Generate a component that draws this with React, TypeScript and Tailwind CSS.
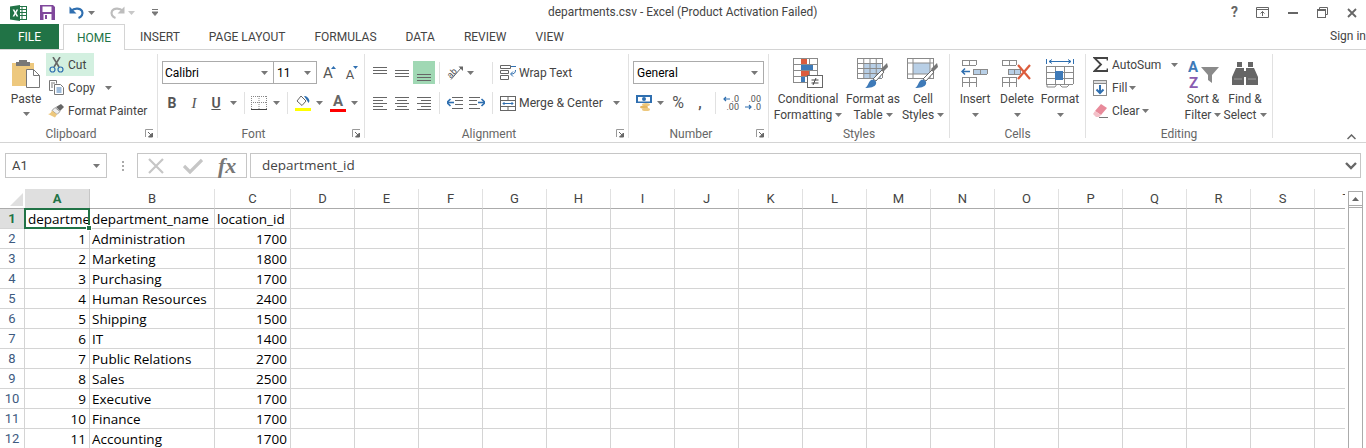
import React from 'react'

const ui = "font-['Roboto','Noto_Sans',sans-serif]"
const cellFont = "font-['Open_Sans','Noto_Sans',sans-serif]"

const colWidths = [65, 125, 76, ...Array(17).fill(64)]
const colNames = 'ABCDEFGHIJKLMNOPQRST'.split('')

const rows: [string, string, string][] = [
  ['department_id', 'department_name', 'location_id'],
  ['1', 'Administration', '1700'],
  ['2', 'Marketing', '1800'],
  ['3', 'Purchasing', '1700'],
  ['4', 'Human Resources', '2400'],
  ['5', 'Shipping', '1500'],
  ['6', 'IT', '1400'],
  ['7', 'Public Relations', '2700'],
  ['8', 'Sales', '2500'],
  ['9', 'Executive', '1700'],
  ['10', 'Finance', '1700'],
  ['11', 'Accounting', '1700'],
]

function Caret({ className = '' }: { className?: string }) {
  return (
    <svg width="7" height="4" viewBox="0 0 7 4" className={`shrink-0 ${className}`}>
      <path d="M0 0h7L3.5 4z" fill="#777" />
    </svg>
  )
}

function Box({ w = 22, children, className = '' }: { w?: number; children?: React.ReactNode; className?: string }) {
  return (
    <div className={`flex h-[22px] shrink-0 items-center justify-center ${className}`} style={{ width: w }}>
      {children}
    </div>
  )
}

function Sep({ className = '' }: { className?: string }) {
  return <div className={`h-[22px] w-px shrink-0 bg-[#e1e1e1] ${className}`} />
}

function Launcher() {
  return (
    <svg width="9" height="9" viewBox="0 0 9 9" className="absolute bottom-0 right-[3px]">
      <path d="M0.5 8V0.5H8" fill="none" stroke="#999" />
      <path d="M3 3l4 4M7.5 4v4h-4z" stroke="#666" fill="#666" />
    </svg>
  )
}

function Group({
  width,
  label,
  launcher = false,
  children,
}: {
  width: string
  label: string
  launcher?: boolean
  children: React.ReactNode
}) {
  return (
    <div className={`relative flex h-[84px] shrink-0 flex-col border-r border-[#e1e1e1] ${width}`}>
      <div className="flex h-[72px] min-h-0">{children}</div>
      <div className={`-mb-[4px] mt-auto h-[16px] text-center text-[12px] leading-[16px] text-[#666] ${launcher ? 'pr-[15px]' : ''}`}>
        {label}
      </div>
      {launcher && <Launcher />}
    </div>
  )
}

function BigButton({
  width,
  icon,
  line1,
  line2,
}: {
  width: string
  icon: React.ReactNode
  line1: string
  line2?: string
}) {
  return (
    <div className={`flex shrink-0 flex-col items-center text-[12px] leading-[16px] ${width}`}>
      <div className="mt-[3px] flex h-[33px] items-center justify-center">{icon}</div>
      <div className="mt-[1px] whitespace-nowrap">{line1}</div>
      {line2 ? (
        <div className="flex items-center gap-[3px] whitespace-nowrap">
          {line2}
          <Caret />
        </div>
      ) : (
        <div className="flex h-[16px] items-center">
          <Caret />
        </div>
      )}
    </div>
  )
}

function ExcelLogo() {
  return (
    <svg width="17" height="16" viewBox="0 0 17 16">
      <rect x="8" y="1.5" width="8.5" height="13" fill="#fff" stroke="#217346" />
      <path d="M8 4.5h8M8 7.5h8M8 10.5h8M12 2v12" stroke="#217346" />
      <path d="M0 1.5L10 0v16L0 14.5z" fill="#217346" />
      <path d="M2.6 4.5h1.8l1 2.2 1.1-2.2h1.7L6.4 8l1.9 3.5H6.5L5.4 9.2l-1.1 2.3H2.6L4.5 8z" fill="#fff" />
    </svg>
  )
}

function SaveIcon() {
  return (
    <svg width="15" height="15" viewBox="0 0 15 15">
      <path d="M0 0h13l2 2v13H0z" fill="#80489c" />
      <rect x="2.5" y="1.5" width="9" height="5.5" fill="#fff" />
      <rect x="3.5" y="9" width="8" height="6" fill="#fff" />
      <rect x="5" y="10" width="2" height="4" fill="#80489c" />
    </svg>
  )
}

function UndoArrow({ color }: { color: string }) {
  return (
    <svg width="16" height="15" viewBox="0 0 16 15">
      <path d="M2 6c3-3 9-3.5 11 0 1.5 3-.5 6-3.5 7" fill="none" stroke={color} strokeWidth="2.2" />
      <path d="M0.5 1.5v7h7z" fill={color} />
    </svg>
  )
}

function PasteIcon() {
  return (
    <svg width="30" height="30" viewBox="0 0 30 30">
      <path d="M1 5h22v23H1z" fill="#edc87e" />
      <path d="M8 2h8v2h3v4H5V4h3z" fill="#777" />
      <path d="M15.5 11.5h7l6 6v12h-13z" fill="#fff" stroke="#777" />
      <path d="M22.5 11.5v6h6" fill="none" stroke="#777" />
    </svg>
  )
}

function ScissorsIcon() {
  return (
    <svg width="15" height="16" viewBox="0 0 15 16">
      <path d="M4 0l6 10M11 0L5 10" stroke="#666" strokeWidth="1.6" fill="none" />
      <circle cx="3.5" cy="12.5" r="2.5" fill="none" stroke="#2f6fb0" strokeWidth="1.2" />
      <circle cx="11.5" cy="12.5" r="2.5" fill="none" stroke="#2f6fb0" strokeWidth="1.2" />
    </svg>
  )
}

function CopyIcon() {
  return (
    <svg width="15" height="15" viewBox="0 0 15 15">
      <path d="M.5.5h7v3M.5.5v10h3.5" fill="none" stroke="#777" />
      <path d="M2 3h4M2 5h2M2 7h2" stroke="#777" />
      <path d="M5.5 4.5h6l3 3v7h-9z" fill="#fff" stroke="#777" />
      <path d="M7.5 8h5M7.5 10h5M7.5 12h5" stroke="#3e7ab8" />
    </svg>
  )
}

function BrushIcon() {
  return (
    <svg width="16" height="14" viewBox="0 0 16 14">
      <path d="M8 3l5-3 3 3-4 4z" fill="#666" />
      <path d="M7 3.5l5 4-3 3-5-4z" fill="#eee" stroke="#999" />
      <path d="M4 6.5l5 4-2 3-7-3.5c2 0 3-1.5 4-3.5z" fill="#edc87e" />
    </svg>
  )
}

function FontGrow({ up }: { up: boolean }) {
  return (
    <div className="relative flex h-[16px] w-[16px] items-end justify-center">
      <span className={`leading-none text-[#555] ${up ? 'text-[15px]' : 'text-[13px]'}`}>A</span>
      <svg width="5" height="3" viewBox="0 0 5 3" className="absolute right-0 top-[1px]">
        <path d={up ? 'M0 3h5L2.5 0z' : 'M0 0h5L2.5 3z'} fill="#2f6fb0" />
      </svg>
    </div>
  )
}

function BorderIcon() {
  return (
    <svg width="16" height="14" viewBox="0 0 16 14">
      <path d="M.5 0v13M15.5 0v13M8 0v13M0 .5h16M0 6.5h16" stroke="#888" strokeDasharray="1 1" fill="none" />
      <path d="M0 13.5h16" stroke="#444" />
    </svg>
  )
}

function FillIcon() {
  return (
    <svg width="16" height="16" viewBox="0 0 16 16">
      <path d="M6 1l5 5-4 4.5L2 6z" fill="#fff" stroke="#666" />
      <path d="M9 1c3 0 5 2 5.5 5l-1 2-1.5-2.5z" fill="#2f6fb0" />
      <rect y="13" width="16" height="3" fill="#ffff00" />
    </svg>
  )
}

function FontColorIcon() {
  return (
    <div className="flex w-[16px] flex-col items-center">
      <span className="h-[12px] text-[15px] font-bold leading-[13px] text-[#666]">A</span>
      <div className="mt-[2px] h-[3px] w-[16px] bg-[#ff0000]" />
    </div>
  )
}

function AlignV({ offset }: { offset: number }) {
  return (
    <svg width="14" height="16" viewBox="0 0 14 16">
      {[0, 3, 6].map((d) => (
        <path key={d} d={`M0 ${offset + d + 0.5}H14`} stroke="#666" />
      ))}
    </svg>
  )
}

function AlignH({ kind }: { kind: 'l' | 'c' | 'r' }) {
  const short = kind === 'l' ? ['M0 3.5H10', 'M0 9.5H10'] : kind === 'c' ? ['M2 3.5H12', 'M2 9.5H12'] : ['M4 3.5H14', 'M4 9.5H14']
  return (
    <svg width="14" height="13" viewBox="0 0 14 13">
      <path d="M0 .5H14M0 6.5H14M0 12.5H14" stroke="#666" />
      {short.map((d) => (
        <path key={d} d={d} stroke="#666" />
      ))}
    </svg>
  )
}

function IndentIcon({ flip }: { flip: boolean }) {
  return (
    <svg width="16" height="12" viewBox="0 0 16 12" style={flip ? { transform: 'scaleX(-1)' } : undefined}>
      <path d="M5 .5h11M8 3.5h8M8 7.5h8M5 11.5h11" stroke="#666" />
      <path d="M0 5.5h7" stroke="#2f6fb0" strokeWidth="1.6" />
      <path d="M3.5 2L0 5.5 3.5 9" fill="none" stroke="#2f6fb0" strokeWidth="1.6" />
    </svg>
  )
}

function OrientIcon() {
  return (
    <svg width="17" height="17" viewBox="0 0 17 17">
      <text x="0" y="12" fontSize="9" fill="#555" fontFamily="Roboto, sans-serif" transform="rotate(-45 5 9)">
        ab
      </text>
      <path d="M4 15.5L14 4" stroke="#666" />
      <path d="M11.5 2.5H16V7z" fill="#666" />
    </svg>
  )
}

function WrapIcon() {
  return (
    <svg width="16" height="15" viewBox="0 0 16 15">
      <path d="M.5 .5h10v3H.5zM.5 5.5h8v3H.5zM.5 10.5h8v4H.5z" fill="none" stroke="#666" />
      <path d="M11 1.5h5" stroke="#2f6fb0" />
      <path d="M15.5 5c0 3-1.5 4-4.5 4M13 6.5L10.5 9l2.5 2.5" fill="none" stroke="#2f6fb0" />
    </svg>
  )
}

function MergeIcon() {
  return (
    <svg width="16" height="15" viewBox="0 0 16 15">
      <rect x=".5" y=".5" width="15" height="14" fill="none" stroke="#666" />
      <path d="M0 4.5h16M0 10.5h16M8 1v3M8 11v3" stroke="#666" />
      <path d="M3 7.5h10M4.5 6L3 7.5 4.5 9M11.5 6L13 7.5 11.5 9" fill="none" stroke="#2f6fb0" />
    </svg>
  )
}

function CurrencyIcon() {
  return (
    <svg width="17" height="16" viewBox="0 0 17 16">
      <rect x="0" y="0" width="16" height="8" fill="#2f6fb0" />
      <rect x="2" y="2" width="12" height="4.5" fill="#fff" />
      <circle cx="8" cy="4" r="2" fill="#2f6fb0" />
      <ellipse cx="10" cy="9.5" rx="4" ry="1.6" fill="#edc87e" />
      <ellipse cx="8" cy="12" rx="4" ry="1.6" fill="#e5b65e" />
      <ellipse cx="10" cy="14.4" rx="4" ry="1.6" fill="#edc87e" />
    </svg>
  )
}

function DecimalIcon({ more }: { more: boolean }) {
  return (
    <div className="relative h-[16px] w-[16px] text-[9px] leading-[8px] text-[#555]">
      <div className="text-right">{more ? '.0' : '.00'}</div>
      <div className="text-right">{more ? '.00' : '.0'}</div>
      <svg width="7" height="6" viewBox="0 0 7 6" className={`absolute left-0 ${more ? 'top-[1px]' : 'top-[9px]'}`}>
        <path d={more ? 'M7 3H1M3 1L1 3l2 2' : 'M0 3h6M4 1l2 2-2 2'} fill="none" stroke="#2f6fb0" strokeWidth="1.2" />
      </svg>
    </div>
  )
}

function GridLines({ x, y, w, h, cols, rows: r }: { x: number; y: number; w: number; h: number; cols: number; rows: number }) {
  const parts: string[] = []
  for (let i = 0; i <= cols; i++) parts.push(`M${x + (w * i) / cols + 0.5} ${y}V${y + h}`)
  for (let i = 0; i <= r; i++) parts.push(`M${x} ${y + (h * i) / r + 0.5}H${x + w}`)
  return <path d={parts.join('')} stroke="#8a8a8a" fill="none" />
}

function CondFormatIcon() {
  return (
    <svg width="30" height="31" viewBox="0 0 30 31">
      <GridLines x={0} y={0} w={24} h={24} cols={3} rows={4} />
      <rect x="8" y="1" width="6" height="5" fill="#dc5c3c" />
      <rect x="8" y="7" width="12" height="5" fill="#3e7ab8" />
      <rect x="8" y="13" width="8" height="5" fill="#dc5c3c" />
      <rect x="8" y="19" width="4" height="5" fill="#3e7ab8" />
      <rect x="14.5" y="17.5" width="15" height="12" fill="#fff" stroke="#666" />
      <path d="M18.5 22h7M18.5 25h7M23 20l-3 7" stroke="#444" fill="none" />
    </svg>
  )
}

function TablePaintIcon({ cell }: { cell: boolean }) {
  return (
    <svg width="32" height="31" viewBox="0 0 32 31">
      {cell ? (
        <>
          <rect x=".5" y=".5" width="26" height="20" fill="#fff" stroke="#8a8a8a" />
          <rect x="6" y="5" width="17" height="11" fill="#b8cfe6" />
          <path d="M6 0v21M0 5h27M23 0v21M0 16h27" stroke="#8a8a8a" fill="none" />
        </>
      ) : (
        <>
          <rect x="7" y="5" width="17" height="15" fill="#b8cfe6" />
          <GridLines x={0} y={0} w={25} h={20} cols={4} rows={4} />
        </>
      )}
      <path d="M16 21l9-9 2 2-8 9z" fill="#fff" stroke="#666" />
      <path d="M24 11l6-6 1 4-5 5z" fill="#777" />
      <path d="M8 30c3-1 3-6 6-8 3-1 6 1 5 4-1 3-6 4-11 4z" fill="#3e7ab8" />
    </svg>
  )
}

function InsertCellIcon() {
  return (
    <svg width="28" height="27" viewBox="0 0 28 27">
      <GridLines x={1} y={0} w={14} h={5} cols={2} rows={1} />
      <rect x="12" y="9" width="14" height="5" fill="#b8cfe6" />
      <GridLines x={12} y={9} w={14} h={5} cols={2} rows={1} />
      <path d="M1 11.5h8M4 8.5l-3 3 3 3" fill="none" stroke="#2f6fb0" strokeWidth="1.5" />
      <GridLines x={1} y={17} w={14} h={10} cols={2} rows={2} />
    </svg>
  )
}

function DeleteCellIcon() {
  return (
    <svg width="30" height="27" viewBox="0 0 30 27">
      <GridLines x={0} y={0} w={14} h={5} cols={2} rows={1} />
      <rect x="6" y="9" width="12" height="5" fill="#b8cfe6" />
      <GridLines x={6} y={9} w={12} h={5} cols={2} rows={1} />
      <GridLines x={0} y={17} w={14} h={10} cols={2} rows={2} />
      <path d="M16 5l12 14M28 5L16 19" stroke="#dc5c3c" strokeWidth="2.2" />
    </svg>
  )
}

function FormatCellIcon() {
  return (
    <svg width="28" height="30" viewBox="0 0 28 30">
      <path d="M.5 0v5M27.5 0v5" stroke="#2f6fb0" />
      <path d="M3 2.5h22M6 .5l-3 2 3 2M22 .5l3 2-3 2" fill="none" stroke="#2f6fb0" />
      <GridLines x={0} y={7} w={27} h={18} cols={3} rows={3} />
      <rect x="9" y="12" width="8" height="9" fill="#3e7ab8" />
      <path d="M1 25v3h8l2-3M13 25l3 3h5l3-3" fill="none" stroke="#8a8a8a" />
    </svg>
  )
}

function SigmaIcon() {
  return (
    <svg width="15" height="15" viewBox="0 0 15 15">
      <path d="M14.5 3.5V1H1.5L8 7.5 1.5 14H14.5v-2.5" fill="none" stroke="#444" strokeWidth="1.8" />
    </svg>
  )
}

function FillDownIcon() {
  return (
    <svg width="14" height="16" viewBox="0 0 14 16">
      <rect x=".5" y=".5" width="13" height="15" fill="#fff" stroke="#8a8a8a" />
      <path d="M.5 .5h13v3h-13z" fill="#ddd" stroke="#8a8a8a" />
      <path d="M7 5v8M3.5 9.5L7 13l3.5-3.5" fill="none" stroke="#2f6fb0" strokeWidth="2" />
    </svg>
  )
}

function EraserIcon() {
  return (
    <svg width="16" height="15" viewBox="0 0 16 15">
      <path d="M9 1l6 4-6 7-6-4z" fill="#e88a9a" />
      <path d="M3 8l6 4-2 2-3 0-3-3z" fill="#f3c0c8" />
      <path d="M7 14.5h9" stroke="#777" />
    </svg>
  )
}

function SortIcon() {
  return (
    <svg width="31" height="30" viewBox="0 0 31 30">
      <text x="0" y="13" fontSize="15" fontWeight="700" fill="#3e7ab8" fontFamily="Roboto, sans-serif">A</text>
      <text x="1" y="29" fontSize="15" fontWeight="700" fill="#8a5cb0" fontFamily="Roboto, sans-serif">Z</text>
      <path d="M13 8h18l-7 8v8l-4-3v-5z" fill="#8a8a8a" />
    </svg>
  )
}

function BinocularIcon() {
  return (
    <svg width="26" height="24" viewBox="0 0 26 24">
      <path d="M5 0h5v5H5zM16 0h5v5h-5z" fill="#666" />
      <path d="M4 6h8v17H0v-8zM22 6h-8v17h12v-8z" fill="#666" />
      <path d="M11 9h4v6h-4z" fill="#666" />
      <path d="M2 17h8M16 17h8" stroke="#999" />
    </svg>
  )
}

function Row({ children, className = '' }: { children: React.ReactNode; className?: string }) {
  return <div className={`flex h-[23px] items-center ${className}`}>{children}</div>
}

function Ribbon() {
  return (
    <div className="flex h-[93px] border-b border-[#d4d4d4] pt-[4px] text-[#444]">
      <Group width="w-[158px]" label="Clipboard" launcher>
        <div className="flex w-[46px] shrink-0 flex-col items-center text-[12px] leading-[16px]">
          <div className="ml-[6px] mt-[4px]">
            <PasteIcon />
          </div>
          <div className="ml-[6px] mt-[3px]">Paste</div>
          <Caret className="ml-[6px] mt-[5px]" />
        </div>
        <div className="-mt-px flex flex-col text-[12px]">
          <Row className="w-[48px] bg-[#d3f0e0]">
            <Box w={20}>
              <ScissorsIcon />
            </Box>
            <span className="ml-[2px]">Cut</span>
          </Row>
          <Row>
            <Box w={20}>
              <CopyIcon />
            </Box>
            <span className="ml-[2px]">Copy</span>
            <Caret className="ml-[10px]" />
          </Row>
          <Row>
            <Box w={20}>
              <BrushIcon />
            </Box>
            <span className="ml-[2px] whitespace-nowrap">Format Painter</span>
          </Row>
        </div>
      </Group>

      <Group width="w-[207px]" label="Font" launcher>
        <div className="pl-[4px] pt-[7px] text-[12px]">
          <div className="flex h-[23px] items-center">
            <div className="flex h-[23px] w-[112px] items-center justify-between border border-[#ababab] pl-[2px] pr-[5px] text-black">
              Calibri
              <Caret />
            </div>
            <div className="-ml-px flex h-[23px] w-[44px] items-center justify-between border border-[#ababab] pl-[3px] pr-[5px] text-black">
              11
              <Caret />
            </div>
            <Box>
              <FontGrow up />
            </Box>
            <Box>
              <FontGrow up={false} />
            </Box>
          </div>
          <div className="-ml-px mt-[8px] flex items-center">
            <Box className="text-[14px] font-bold text-[#555]">B</Box>
            <Box className="font-['Liberation_Serif',serif] text-[15px] italic text-[#555]">I</Box>
            <Box className="text-[14px] font-semibold text-[#555] underline">U</Box>
            <Box w={12}>
              <Caret />
            </Box>
            <Sep className="ml-[5px]" />
            <Box className="ml-[3px]">
              <BorderIcon />
            </Box>
            <Box w={12}>
              <Caret />
            </Box>
            <Sep className="ml-[5px]" />
            <Box className="ml-[4px]">
              <FillIcon />
            </Box>
            <Box w={10}>
              <Caret />
            </Box>
            <Box className="ml-[3px]">
              <FontColorIcon />
            </Box>
            <Box w={10}>
              <Caret />
            </Box>
          </div>
        </div>
      </Group>

      <Group width="w-[264px]" label="Alignment" launcher>
        <div className="pl-[4px] pt-[7px] text-[12px]">
          <div className="flex h-[23px] items-center">
            <Box>
              <AlignV offset={2} />
            </Box>
            <Box>
              <AlignV offset={5} />
            </Box>
            <div className="flex h-[23px] w-[22px] items-center justify-center bg-[#a0d8b4]">
              <AlignV offset={9} />
            </div>
            <Sep className="mx-[4px]" />
            <Box>
              <OrientIcon />
            </Box>
            <Box w={8}>
              <Caret />
            </Box>
            <Sep className="ml-[18px] mr-[7px]" />
            <WrapIcon />
            <span className="ml-[3px] whitespace-nowrap">Wrap Text</span>
          </div>
          <div className="mt-[8px] flex items-center">
            <Box>
              <AlignH kind="l" />
            </Box>
            <Box>
              <AlignH kind="c" />
            </Box>
            <Box>
              <AlignH kind="r" />
            </Box>
            <Sep className="mx-[4px]" />
            <Box>
              <IndentIcon flip={false} />
            </Box>
            <Box>
              <IndentIcon flip />
            </Box>
            <Sep className="ml-[4px] mr-[7px]" />
            <MergeIcon />
            <span className="ml-[3px] whitespace-nowrap pt-[1px] text-[12.2px]">Merge &amp; Center</span>
            <Caret className="ml-[10px]" />
          </div>
        </div>
      </Group>

      <Group width="w-[140px]" label="Number" launcher>
        <div className="pl-[4px] pt-[7px] text-[12px]">
          <div className="flex h-[23px] w-[131px] items-center justify-between border border-[#ababab] pl-[3px] pr-[5px] text-black">
            General
            <Caret />
          </div>
          <div className="mt-[8px] flex items-center">
            <Box>
              <CurrencyIcon />
            </Box>
            <Box w={10}>
              <Caret />
            </Box>
            <Box className="ml-[2px] text-[16px] text-[#555]">%</Box>
            <Box className="text-[14px] font-bold text-[#555]">,</Box>
            <Sep className="mx-[4px]" />
            <Box>
              <DecimalIcon more />
            </Box>
            <Box>
              <DecimalIcon more={false} />
            </Box>
          </div>
        </div>
      </Group>

      <Group width="w-[181px]" label="Styles">
        <BigButton width="ml-[4px] w-[70px]" icon={<CondFormatIcon />} line1="Conditional" line2="Formatting" />
        <BigButton width="w-[60px]" icon={<TablePaintIcon cell={false} />} line1="Format as" line2="Table" />
        <BigButton width="w-[40px]" icon={<TablePaintIcon cell />} line1="Cell" line2="Styles" />
      </Group>

      <Group width="w-[136px]" label="Cells">
        <BigButton width="ml-[4px] w-[42px]" icon={<InsertCellIcon />} line1="Insert" />
        <BigButton width="w-[42px]" icon={<DeleteCellIcon />} line1="Delete" />
        <BigButton width="w-[44px]" icon={<FormatCellIcon />} line1="Format" />
      </Group>

      <Group width="w-[187px]" label="Editing">
        <div className="-mt-px flex w-[96px] shrink-0 flex-col pl-[6px] text-[12px]">
          <Row>
            <Box w={16}>
              <SigmaIcon />
            </Box>
            <span className="ml-[4px]">AutoSum</span>
            <Caret className="ml-[10px]" />
          </Row>
          <Row>
            <Box w={16}>
              <FillDownIcon />
            </Box>
            <span className="ml-[4px]">Fill</span>
            <Caret className="ml-[2px]" />
          </Row>
          <Row>
            <Box w={16}>
              <EraserIcon />
            </Box>
            <span className="ml-[4px]">Clear</span>
            <Caret className="ml-[2px]" />
          </Row>
        </div>
        <BigButton width="w-[42px]" icon={<SortIcon />} line1="Sort &" line2="Filter" />
        <BigButton width="w-[42px]" icon={<BinocularIcon />} line1="Find &" line2="Select" />
      </Group>

      <div className="relative flex-1">
        <svg width="9" height="6" viewBox="0 0 9 6" className="absolute bottom-[2px] right-[10px]">
          <path d="M.5 5l4-4 4 4" fill="none" stroke="#666" strokeWidth="1.5" />
        </svg>
      </div>
    </div>
  )
}

function FormulaBar() {
  return (
    <div className={`mt-[10px] flex h-[25px] pl-[5px] pr-[5px] text-[12px] text-[#444]`}>
      <div className="flex w-[102px] items-center justify-between border border-[#c6c6c6] pl-[6px] pr-[6px] text-[13px]">
        A1
        <Caret />
      </div>
      <div className="ml-[14px] flex w-[4px] flex-col items-center justify-center gap-[2px]">
        <div className="h-[2px] w-[2px] bg-[#aaa]" />
        <div className="h-[2px] w-[2px] bg-[#aaa]" />
        <div className="h-[2px] w-[2px] bg-[#aaa]" />
      </div>
      <div className="ml-[12px] flex w-[110px] items-center border border-[#c6c6c6] pl-[9px]">
        <svg width="18" height="16" viewBox="0 0 18 16">
          <path d="M2 1l14 14M16 1L2 15" stroke="#c6c6c6" strokeWidth="2.2" />
        </svg>
        <svg width="20" height="16" viewBox="0 0 20 16" className="ml-[18px]">
          <path d="M1 8l6 6L19 2" fill="none" stroke="#c6c6c6" strokeWidth="3.2" />
        </svg>
        <span className="ml-[15px] font-['Liberation_Serif',serif] text-[22px] font-bold italic leading-none text-[#777]">fx</span>
      </div>
      <div className="ml-[3px] flex flex-1 items-center justify-between border border-[#c6c6c6] pl-[11px] pr-[3px]">
        <span className={`${cellFont} text-[13.5px]`}>department_id</span>
        <svg width="12" height="8" viewBox="0 0 12 8">
          <path d="M1 1l5 5 5-5" fill="none" stroke="#666" strokeWidth="2.4" />
        </svg>
      </div>
    </div>
  )
}

function Sheet() {
  return (
    <div className="mt-[11px] flex h-[259px]">
      <div className="w-[1345px] shrink-0 overflow-hidden">
        <div className="flex h-[20px] w-max">
          <div className="relative w-[25px] shrink-0 border-b border-[#ababab]">
            <svg width="13" height="13" viewBox="0 0 13 13" className="absolute left-[10px] top-[4px]">
              <path d="M13 0v13H0z" fill="#dfdfdf" />
            </svg>
          </div>
          {colNames.map((c, i) => (
            <div
              key={c}
              className={`flex h-[20px] shrink-0 items-center justify-center border-b border-r text-[13px] ${
                i === 0
                  ? 'border-b-[#217346] border-r-[#c6c6c6] bg-[#dfdfdf] font-bold text-[#217346]'
                  : 'border-b-[#ababab] border-r-[#e1e1e1] text-[#444]'
              }`}
              style={{ width: colWidths[i] }}
            >
              {c}
            </div>
          ))}
        </div>
        <div className="relative">
          {rows.map((row, r) => (
            <div key={r} className="flex h-[20px] w-max">
              <div
                className={`flex w-[25px] shrink-0 items-center justify-center border-b border-r text-[13px] ${
                  r === 0
                    ? 'border-b-[#d4d4d4] border-r-[#217346] bg-[#dfdfdf] font-bold text-[#217346]'
                    : 'border-b-[#d4d4d4] border-r-[#d4d4d4] text-[#3d5a80]'
                }`}
              >
                {r + 1}
              </div>
              {colNames.map((c, i) => {
                const text = i < 3 ? row[i] : ''
                const numeric = r > 0 && (i === 0 || i === 2)
                return (
                  <div
                    key={c}
                    className={`h-[20px] shrink-0 overflow-hidden whitespace-nowrap border-b border-r border-[#d4d4d4] ${cellFont} text-[13.5px] leading-[20px] text-black ${
                      numeric ? 'pr-[3px] text-right' : i === 0 ? 'pl-[3px]' : 'pl-[2px]'
                    }`}
                    style={{ width: colWidths[i] }}
                  >
                    {text}
                  </div>
                )
              })}
            </div>
          ))}
          <div className="pointer-events-none absolute left-[24px] top-[-1px] h-[21px] w-[66px] border-2 border-[#217346]">
            <div className="absolute bottom-[-4px] right-[-4px] h-[6px] w-[6px] border border-white bg-[#217346]" />
          </div>
        </div>
      </div>
      <div className="ml-[3px] mt-[2px] flex w-[15px] flex-col border-x border-[#ababab]">
        <div className="flex h-[15px] items-center justify-center border-y border-[#ababab]">
          <svg width="7" height="4" viewBox="0 0 7 4">
            <path d="M0 4h7L3.5 0z" fill="#666" />
          </svg>
        </div>
        <div className="mt-[1px] border-t border-[#ababab]" />
      </div>
    </div>
  )
}

export default function App() {
  return (
    <div className={`h-[448px] w-[1366px] overflow-hidden bg-white ${ui} text-[12px] text-[#444]`}>
      <div className="flex h-[25px] items-center">
        <div className="ml-[10px]">
          <ExcelLogo />
        </div>
        <div className="ml-[13px]">
          <SaveIcon />
        </div>
        <div className="ml-[14px]">
          <UndoArrow color="#2f6fb0" />
        </div>
        <Caret className="ml-[3px]" />
        <div className="ml-[14px] scale-x-[-1]">
          <UndoArrow color="#bdbdbd" />
        </div>
        <Caret className="ml-[3px] opacity-40" />
        <svg width="6" height="7" viewBox="0 0 6 7" className="ml-[17px]">
          <path d="M0 .5h6M0 3h6L3 6.5z" stroke="#777" fill="#777" strokeWidth="1" />
        </svg>
        <div className="ml-[390px] whitespace-nowrap pt-[1px] text-[11.9px]">departments.csv - Excel (Product Activation Failed)</div>
        <div className="ml-auto flex items-center pr-[9px]">
          <span className="mr-[18px] text-[14px] font-bold text-[#666]">?</span>
          <svg width="13" height="11" viewBox="0 0 13 11" className="mr-[19px]">
            <path d="M.5.5h12v10H.5zM.5 2.5h12" fill="none" stroke="#666" />
            <path d="M6.5 9V4.5M4.5 6.5l2-2 2 2" fill="none" stroke="#666" />
          </svg>
          <div className="mr-[19px] h-[2px] w-[10px] bg-[#666]" />
          <svg width="11" height="11" viewBox="0 0 11 11" className="mr-[19px]">
            <path d="M2.5 2.5V.5h8v7h-2" fill="none" stroke="#666" />
            <rect x=".5" y="2.5" width="8" height="8" fill="none" stroke="#666" />
            <path d="M1 3.5h7" stroke="#666" />
          </svg>
          <svg width="10" height="10" viewBox="0 0 10 10">
            <path d="M1 1l8 8M9 1L1 9" stroke="#666" strokeWidth="1.8" />
          </svg>
        </div>
      </div>

      <div className="flex h-[25px] items-end border-b border-[#d4d4d4] text-[12px]">
        <div className="flex h-[25px] w-[59px] items-center justify-center bg-[#217346] pt-[1px] text-white">FILE</div>
        <div className="relative z-10 -mb-px ml-[4px] flex h-[26px] w-[62px] items-center justify-center border-x border-t border-[#d4d4d4] bg-white pt-[1px] text-[#217346]">
          HOME
        </div>
        <div className="flex h-[25px] items-center pt-[1px]">
          <span className="ml-[15px]">INSERT</span>
          <span className="ml-[29px]">PAGE LAYOUT</span>
          <span className="ml-[29px]">FORMULAS</span>
          <span className="ml-[29px]">DATA</span>
          <span className="ml-[29px]">REVIEW</span>
          <span className="ml-[29px]">VIEW</span>
        </div>
        <div className="ml-auto flex h-[25px] items-center pb-[1px]">Sign in</div>
      </div>

      <Ribbon />
      <FormulaBar />
      <Sheet />
    </div>
  )
}
